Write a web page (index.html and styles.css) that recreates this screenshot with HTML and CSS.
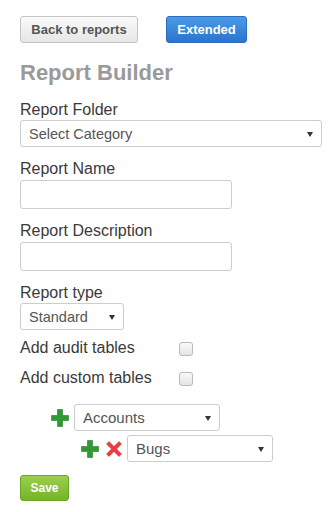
FILE: index.html
```html
<!DOCTYPE html>
<html>
<head>
<meta charset="utf-8">
<link rel="stylesheet" href="styles.css">
</head>
<body>
<div class="page">
  <div class="toolbar">
    <button class="btn btn-default">Back to reports</button>
    <button class="btn btn-primary">Extended</button>
  </div>
  <h2 class="title">Report Builder</h2>

  <div class="field">
    <label class="label">Report Folder</label>
    <span class="select select-folder"><select><option>Select Category</option></select></span>
  </div>

  <div class="field">
    <label class="label">Report Name</label>
    <input class="text-input" type="text">
  </div>

  <div class="field">
    <label class="label">Report Description</label>
    <input class="text-input" type="text">
  </div>

  <div class="field field-type">
    <label class="label">Report type</label>
    <span class="select select-type"><select><option>Standard</option></select></span>
  </div>

  <div class="check-row">
    <span class="check-label">Add audit tables</span>
    <input class="check" type="checkbox">
  </div>
  <div class="check-row">
    <span class="check-label">Add custom tables</span>
    <input class="check" type="checkbox">
  </div>

  <div class="tree">
    <div class="tree-row level-1">
      <svg class="icon icon-plus" viewBox="0 0 18 18"><path d="M6.5 0.5h5v6h6v5h-6v6h-5v-6h-6v-5h6z"/></svg>
      <span class="select select-table"><select><option>Accounts</option></select></span>
    </div>
    <div class="tree-row level-2">
      <svg class="icon icon-plus" viewBox="0 0 18 18"><path d="M6.5 0.5h5v6h6v5h-6v6h-5v-6h-6v-5h6z"/></svg>
      <svg class="icon icon-remove" viewBox="0 0 16 16"><path d="M3 0.5L8 5.5L13 0.5L15.5 3L10.5 8L15.5 13L13 15.5L8 10.5L3 15.5L0.5 13L5.5 8L0.5 3z"/></svg>
      <span class="select select-table"><select><option>Bugs</option></select></span>
    </div>
  </div>

  <button class="btn btn-save">Save</button>
</div>
</body>
</html>
```

FILE: styles.css
```css
* { box-sizing: border-box; }

body {
  margin: 0;
  background: #ffffff;
  font-family: "Liberation Sans", Arial, sans-serif;
  color: #3a3a3a;
}

.page {
  padding: 16px 0 0 20px;
}

.toolbar {
  display: flex;
  gap: 28px;
}

.btn {
  font-family: "Liberation Sans", Arial, sans-serif;
  font-weight: bold;
  font-size: 13px;
  height: 27px;
  border-radius: 3px;
  padding: 0 10px;
  cursor: pointer;
}

.btn-default {
  width: 118px;
  color: #555;
  background: linear-gradient(#fafafa, #e6e6e6);
  border: 1px solid #c4c4c4;
}

.btn-primary {
  width: 81px;
  color: #fff;
  background: linear-gradient(#4b9be6, #2b74cd);
  border: 1px solid #2a6cc0;
}

.title {
  margin: 17px 0 15px 0;
  font-size: 22px;
  line-height: 26px;
  font-weight: bold;
  color: #9a9a9a;
}

.field {
  display: flex;
  flex-direction: column;
  align-items: flex-start;
  margin-bottom: 13px;
}

.label {
  font-size: 16px;
  line-height: 18px;
  margin-bottom: 1px;
  color: #3a3a3a;
}

.select {
  position: relative;
  display: inline-block;
}

.select select {
  appearance: none;
  -webkit-appearance: none;
  width: 100%;
  height: 100%;
  font-family: "Liberation Sans", Arial, sans-serif;
  font-size: 14.5px;
  color: #555;
  background: #fff;
  border: 1px solid #cdcdcd;
  border-radius: 3px;
  padding: 0 20px 0 8px;
  outline: none;
}

.select::after {
  content: "";
  position: absolute;
  right: 9px;
  top: 50%;
  margin-top: -2px;
  border-left: 3.5px solid transparent;
  border-right: 3.5px solid transparent;
  border-top: 5px solid #333;
}

.select-folder {
  width: 302px;
  height: 27px;
}

.text-input {
  width: 212px;
  height: 29px;
  border: 1px solid #cdcdcd;
  border-radius: 3px;
  background: #fff;
  margin-top: 1px;
}

.field-type {
  margin-bottom: 3px;
}

.select-type {
  width: 104px;
  height: 27px;
}

.check-row {
  display: grid;
  grid-template-columns: 159px 14px;
  align-items: center;
  height: 30px;
  font-size: 16px;
}

.check {
  appearance: none;
  -webkit-appearance: none;
  width: 14px;
  height: 14px;
  margin: 2px 0 0 0;
  border: 1px solid #b9b9b9;
  border-radius: 3px;
  background: linear-gradient(#fafafa, #e4e4e4);
}

.tree {
  margin-top: 11px;
  display: flex;
  flex-direction: column;
  gap: 4px;
}

.tree-row {
  display: flex;
  align-items: center;
}

.level-1 { padding-left: 31px; }
.level-2 { padding-left: 61px; }

.icon-plus {
  width: 18px;
  height: 18px;
  fill: #2f9a34;
  stroke: #237a27;
  stroke-width: 0.6;
  margin-right: 5px;
}

.icon-remove {
  width: 16px;
  height: 16px;
  fill: #ec3a3e;
  stroke: #c92a2e;
  stroke-width: 0.5;
  margin: 0 5px 0 2px;
}

.select-table {
  width: 146px;
  height: 27px;
}

.select-table select {
  font-size: 15px;
}

.btn-save {
  margin-top: 13px;
  width: 49px;
  height: 26px;
  font-size: 12px;
  padding: 0;
  color: #fff;
  background: linear-gradient(#9bd04a, #74b42a);
  border: 1px solid #6aa526;
}
```
